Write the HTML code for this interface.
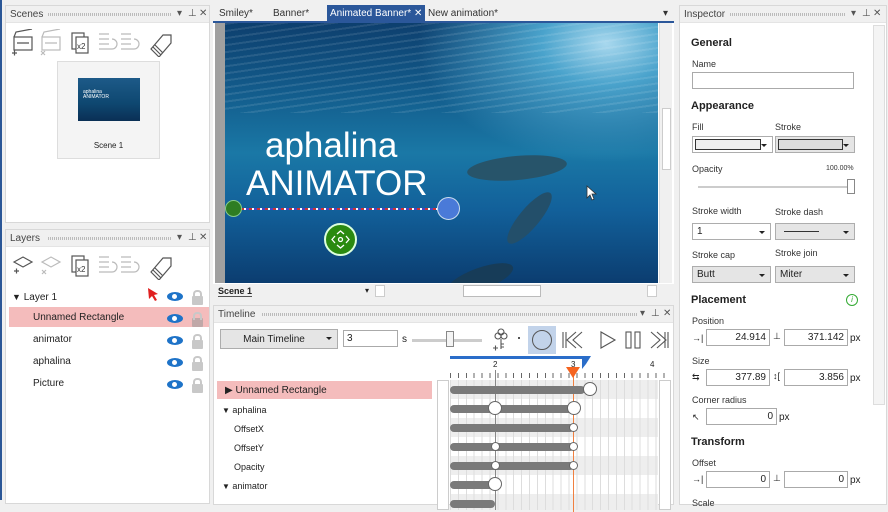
<!DOCTYPE html>
<html><head><meta charset="utf-8"><style>
*{box-sizing:border-box;margin:0;padding:0}
body{width:888px;height:500px;overflow:hidden;background:#f0f0f0;font-family:"Liberation Sans",sans-serif;font-size:10px;color:#222;position:relative}
.a{position:absolute}
.panel{position:absolute;background:#fff;border:1px solid #d8d8d8}
.hdr{position:absolute;left:0;right:0;top:0;height:17px;background:#f0f0f0;font-size:10px;color:#444;padding:3px 0 0 4px;border-bottom:1px solid #e4e4e4}
.dots{position:absolute;top:7px;height:3px;background:repeating-linear-gradient(90deg,#bbb 0 1px,transparent 1px 2px)}
.hic{position:absolute;top:2px;font-size:10px;color:#555}
.row{position:absolute;left:3px;height:20px;font-size:10px;padding-top:5px}
.eye{position:absolute;width:16px;height:9px;border-radius:50%;background:#1e73c8}
.eye:after{content:"";position:absolute;left:5px;top:2px;width:5px;height:5px;border-radius:50%;background:#fff}
.lock{position:absolute;width:11px;height:9px;background:#c8c8c8;border-radius:1px}
.lock:before{content:"";position:absolute;left:1px;top:-6px;width:5px;height:6px;border:2px solid #c8c8c8;border-bottom:none;border-radius:4px 4px 0 0}
.inp{position:absolute;background:#fff;border:1px solid #aaa;height:17px;font-size:10px;text-align:right;padding:2px 3px}
.dd{position:absolute;background:#e5e5e5;border:1px solid #adadad;height:17px;font-size:10px;padding:2px 4px}
.dd:after{content:"";position:absolute;right:5px;top:7px;border:3px solid transparent;border-top:3px solid #222}
.lbl{position:absolute;font-size:9px;color:#333}
.h{position:absolute;font-size:11px;font-weight:bold;color:#222}
.bar{position:absolute;height:8px;background:#7a7a7a;border-radius:4px}
.kf{position:absolute;border-radius:50%;background:#fff;border:1px solid #666}
</style></head><body>
<div class="a" style="left:0;top:0;width:2px;height:500px;background:#2b5797"></div>

<!-- Scenes -->
<div class="panel" style="left:5px;top:5px;width:205px;height:218px">
 <div class="hdr">Scenes<div class="dots" style="left:42px;width:124px"></div><span class="hic" style="left:171px">▾</span><span class="hic" style="left:182px">⊥</span><span class="hic" style="left:193px">✕</span></div>
 <svg class="a" style="left:5px;top:23px" width="170" height="28" fill="none" stroke="#555" stroke-width="1.2">
  <rect x="3" y="8" width="18" height="13"/><path d="M3 8l2-5 16-3M6 14h12M1 24h5M3.5 21.5v5"/>
  <g stroke="#bbb"><rect x="31" y="8" width="18" height="13"/><path d="M31 8l2-5 16-3M34 14h12M30 22l4 4M34 22l-4 4"/></g>
  <rect x="61" y="4" width="12" height="16"/><rect x="65" y="8" width="12" height="16" fill="#fff"/><text x="66" y="20" font-size="8" fill="#333" stroke="none">x2</text>
  <g stroke="#bbb"><path d="M88 5h10M88 10h10M88 15h10M88 20h10M101 10a5 5 0 0 1 0 10h-3"/><path d="M110 5h10M110 10h10M110 15h10M110 20h10M123 10a5 5 0 0 1 0 10h-3"/></g>
  <path d="M140 20l12-14 8 0 0 8-12 14z M142 18l8 8M144 16l8 8"/>
 </svg>
 <div class="a" style="left:51px;top:55px;width:103px;height:98px;background:#f4f4f4;border:1px solid #ddd">
  <div class="a" style="left:20px;top:16px;width:62px;height:43px;background:linear-gradient(180deg,#1d5a88,#0e4770 60%,#0a2f55)"><span class="a" style="left:5px;top:12px;color:#fff;font-size:5px;line-height:5px">aphalina<br>ANIMATOR</span></div>
  <div class="a" style="left:0;right:0;top:79px;text-align:center;font-size:8px">Scene 1</div>
 </div>
</div>

<!-- Layers -->
<div class="panel" style="left:5px;top:229px;width:205px;height:275px">
 <div class="hdr">Layers<div class="dots" style="left:42px;width:124px"></div><span class="hic" style="left:171px">▾</span><span class="hic" style="left:182px">⊥</span><span class="hic" style="left:193px">✕</span></div>
 <svg class="a" style="left:5px;top:22px" width="170" height="28" fill="none" stroke="#555" stroke-width="1.2">
  <path d="M3 10l9-5 9 5-9 5z M3 19h5M5.5 16.5v5"/>
  <g stroke="#bbb"><path d="M31 10l9-5 9 5-9 5zM31 18l4 4M35 18l-4 4"/></g>
  <rect x="61" y="4" width="12" height="16"/><rect x="65" y="8" width="12" height="16" fill="#fff"/><text x="66" y="20" font-size="8" fill="#333" stroke="none">x2</text>
  <g stroke="#bbb"><path d="M88 5h10M88 10h10M88 15h10M88 20h10M101 10a5 5 0 0 1 0 10h-3"/><path d="M110 5h10M110 10h10M110 15h10M110 20h10M123 10a5 5 0 0 1 0 10h-3"/></g>
  <path d="M140 20l12-14 8 0 0 8-12 14z M142 18l8 8M144 16l8 8"/>
 </svg>
 <div class="row" style="top:57px;left:6px"><span style="font-size:9px">▼</span> Layer 1</div>
 <svg class="a" style="left:141px;top:57px" width="12" height="14"><path d="M1 1l10 6-4 1 3 5-2 1-3-5-3 3z" fill="#e02020"/></svg>
 <div class="row" style="top:77px;width:200px;background:#f4bcbc;padding-left:24px">Unnamed Rectangle</div>
 <div class="row" style="top:99px;padding-left:24px">animator</div>
 <div class="row" style="top:121px;padding-left:24px">aphalina</div>
 <div class="row" style="top:143px;padding-left:24px">Picture</div>
 <div class="eye" style="left:161px;top:62px"></div><div class="lock" style="left:186px;top:66px"></div>
 <div class="eye" style="left:161px;top:84px"></div><div class="lock" style="left:186px;top:88px;background:#c0a8a8"></div>
 <div class="eye" style="left:161px;top:106px"></div><div class="lock" style="left:186px;top:110px"></div>
 <div class="eye" style="left:161px;top:128px"></div><div class="lock" style="left:186px;top:132px"></div>
 <div class="eye" style="left:161px;top:150px"></div><div class="lock" style="left:186px;top:154px"></div>
</div>

<!-- Tabs -->
<div class="a" style="left:213px;top:5px;width:461px;height:17px;font-size:10px;color:#333">
 <span class="a" style="left:6px;top:3px">Smiley*</span>
 <span class="a" style="left:60px;top:3px">Banner*</span>
 <span class="a" style="left:114px;top:0;height:17px;width:98px;background:#2b579a;color:#fff;padding:3px 3px;white-space:nowrap">Animated Banner* ✕</span>
 <span class="a" style="left:215px;top:3px">New animation*</span>
 <span class="a" style="left:450px;top:3px">▾</span>
 <div class="a" style="left:0;right:0;top:16px;height:2px;background:#2b579a"></div>
</div>
<div class="a" style="left:213px;top:23px;width:461px;height:262px;background:#fff"></div>
<div class="a" style="left:215px;top:23px;width:10px;height:260px;background:#a0a0a0"></div>
<div class="a" style="left:225px;top:23px;width:433px;height:260px;overflow:hidden;background:radial-gradient(ellipse at 88% 8%,#a8d8ee 0,#4aa3cc 12%,transparent 35%),linear-gradient(180deg,#0d3f6e 0%,#125a8a 25%,#1a78a6 50%,#12609a 72%,#0b3d70 100%)">
 <div class="a" style="left:0;top:0;width:433px;height:90px;background:repeating-linear-gradient(172deg,rgba(255,255,255,.10) 0 2px,transparent 2px 7px)"></div>
 <div class="a" style="left:40px;top:105px;color:#fff;font-size:35px;line-height:36px">aphalina</div>
 <div class="a" style="left:21px;top:143px;color:#fff;font-size:35px;line-height:36px">ANIMATOR</div>
 <div class="a" style="left:242px;top:133px;width:100px;height:24px;background:#27546a;border-radius:50%;transform:rotate(-5deg)"></div>
 <div class="a" style="left:272px;top:185px;width:65px;height:20px;background:#234f6a;border-radius:50%;transform:rotate(-50deg)"></div>
 <div class="a" style="left:220px;top:245px;width:70px;height:22px;background:#173c58;border-radius:50%;transform:rotate(-20deg)"></div>
 <div class="a" style="left:8px;top:185px;width:210px;height:2px;background:repeating-linear-gradient(90deg,#c33 0 3px,#fff 3px 5px,#44c 5px 8px)"></div>
 <div class="a" style="left:0;top:177px;width:17px;height:17px;border-radius:50%;background:#2e7d22;border:1px solid #8c8"></div>
 <div class="a" style="left:212px;top:174px;width:23px;height:23px;border-radius:50%;background:#4a7ad8;border:1px solid #cde"></div>
 <div class="a" style="left:99px;top:200px;width:33px;height:33px;border-radius:50%;background:#2a8a10;border:2px solid #dfd"><svg width="29" height="29" fill="none" stroke="#fff" stroke-width="1.3"><path d="M11 9l3.5-3 3.5 3M11 20l3.5 3 3.5-3M9 11l-3 3.5 3 3.5M20 11l3 3.5-3 3.5"/><circle cx="14.5" cy="14.5" r="2"/></svg></div>
 <svg class="a" style="left:361px;top:162px" width="12" height="16"><path d="M1 1v12l3-3 2 5 2-1-2-5h4z" fill="#fff" stroke="#333" stroke-width=".8"/></svg>
</div>
<div class="a" style="left:659px;top:23px;width:13px;height:260px;background:#f0f0f0;border-left:1px solid #ddd"><div class="a" style="left:2px;top:85px;width:9px;height:62px;background:#fff;border:1px solid #ccc"></div></div>
<div class="a" style="left:213px;top:284px;width:461px;height:15px;background:#f0f0f0">
 <span class="a" style="left:5px;top:2px;font-weight:bold;font-size:9px;border-bottom:1px solid #555">Scene 1</span>
 <span class="a" style="left:152px;top:2px;font-size:8px">▾</span>
 <div class="a" style="left:162px;top:1px;width:10px;height:12px;border:1px solid #ccc;background:#fff"></div>
 <div class="a" style="left:250px;top:1px;width:78px;height:12px;border:1px solid #bbb;background:#fff"></div>
 <div class="a" style="left:434px;top:1px;width:10px;height:12px;border:1px solid #ccc;background:#fff"></div>
</div>

<!-- Timeline -->
<div class="panel" style="left:213px;top:305px;width:461px;height:200px">
 <div class="hdr">Timeline<div class="dots" style="left:48px;width:375px"></div><span class="hic" style="left:426px">▾</span><span class="hic" style="left:437px">⊥</span><span class="hic" style="left:449px">✕</span></div>
 <div class="dd" style="left:6px;top:23px;width:118px;height:20px;text-align:center;padding-top:4px;padding-right:14px;font-size:10px">Main Timeline</div>
 <div class="inp" style="left:129px;top:24px;width:55px;text-align:left">3</div>
 <span class="a" style="left:188px;top:28px">s</span>
 <div class="a" style="left:198px;top:33px;width:70px;height:3px;background:#ccc"></div>
 <div class="a" style="left:232px;top:25px;width:8px;height:16px;background:#f4f4f4;border:1px solid #888"></div>
 <svg class="a" style="left:278px;top:20px" width="34" height="28" fill="none" stroke="#555" stroke-width="1.1"><circle cx="9" cy="6" r="3"/><circle cx="6" cy="10" r="3"/><circle cx="12" cy="10" r="3"/><path d="M9 13v10M9 18h3M9 21h3M1 22h5M3.5 19.5v5"/><path d="M28 12l-2 0" stroke-width="2"/></svg>
 <div class="a" style="left:314px;top:20px;width:28px;height:28px;background:#c2d3ea"><div class="a" style="left:4px;top:4px;width:20px;height:20px;border:1.3px solid #555;border-radius:50%"></div></div>
 <svg class="a" style="left:346px;top:24px" width="110" height="22" fill="none" stroke="#555" stroke-width="1.1">
  <path d="M3 2v16M6 2v16M16 2l-9 8 9 8M22 2l-9 8 9 8"/>
  <path d="M41 2v16l14-8z"/>
  <rect x="66" y="2" width="5" height="16"/><rect x="75" y="2" width="5" height="16"/>
  <path d="M91 2l9 8-9 8M97 2l9 8-9 8M108 2v16M105 2v16"/>
 </svg>
 <div class="a" style="left:236px;top:50px;width:138px;height:3px;background:#2a6dc9"></div>
 <div class="a" style="left:368px;top:50px;border:5px solid transparent;border-top:8px solid #2a6dc9;border-left:4px solid #2a6dc9"></div>
 <span class="a" style="left:279px;top:54px;font-size:8px">2</span><span class="a" style="left:357px;top:54px;font-size:8px">3</span><span class="a" style="left:436px;top:54px;font-size:8px">4</span>
 <div class="a" style="left:236px;top:67px;width:220px;height:5px;background:repeating-linear-gradient(90deg,#666 0 1px,transparent 1px 7.9px)"></div>
 <div class="a" style="left:3px;top:75px;width:215px;height:18px;background:#f4bcbc;padding:4px 0 0 8px;font-size:10px">▶ Unnamed Rectangle</div>
 <div class="a" style="left:8px;top:99px;font-size:9px"><span style="font-size:8px">▼</span> aphalina</div>
 <div class="a" style="left:20px;top:118px;font-size:9px">OffsetX</div>
 <div class="a" style="left:20px;top:137px;font-size:9px">OffsetY</div>
 <div class="a" style="left:20px;top:156px;font-size:9px">Opacity</div>
 <div class="a" style="left:8px;top:175px;font-size:9px"><span style="font-size:8px">▼</span> animator</div>
 <div class="a" style="left:223px;top:74px;width:12px;height:130px;border:1px solid #ccc;background:#fff"></div>
 <div class="a" style="left:445px;top:74px;width:12px;height:130px;border:1px solid #ccc;background:#fff"></div>
 <div class="a" style="left:236px;top:74px;width:208px;height:130px;background:repeating-linear-gradient(180deg,#eee 0 19px,#fff 19px 38px)"></div>
 <div class="a" style="left:236px;top:74px;width:208px;height:130px;background:repeating-linear-gradient(90deg,#ddd 0 1px,transparent 1px 7.9px)"></div>
 <div class="a" style="left:281px;top:64px;width:1px;height:140px;background:#888"></div>
 <div class="a" style="left:359px;top:66px;width:1px;height:140px;background:#f08040"></div>
 <div class="a" style="left:352px;top:61px;border:7px solid transparent;border-top:11px solid #f5631f"></div>
 <div class="bar" style="left:236px;top:80px;width:135px"></div><div class="kf" style="left:369px;top:76px;width:14px;height:14px"></div>
 <div class="bar" style="left:236px;top:99px;width:124px"></div><div class="kf" style="left:274px;top:95px;width:14px;height:14px"></div><div class="kf" style="left:353px;top:95px;width:14px;height:14px"></div>
 <div class="bar" style="left:236px;top:118px;width:124px"></div><div class="kf" style="left:355px;top:117px;width:9px;height:9px"></div>
 <div class="bar" style="left:236px;top:137px;width:124px"></div><div class="kf" style="left:277px;top:136px;width:9px;height:9px"></div><div class="kf" style="left:355px;top:136px;width:9px;height:9px"></div>
 <div class="bar" style="left:236px;top:156px;width:124px"></div><div class="kf" style="left:277px;top:155px;width:9px;height:9px"></div><div class="kf" style="left:355px;top:155px;width:9px;height:9px"></div>
 <div class="bar" style="left:236px;top:175px;width:45px"></div><div class="kf" style="left:274px;top:171px;width:14px;height:14px"></div>
 <div class="bar" style="left:236px;top:194px;width:45px"></div>
</div>

<!-- Inspector -->
<div class="panel" style="left:679px;top:5px;width:208px;height:500px">
 <div class="hdr">Inspector<div class="dots" style="left:50px;width:115px"></div><span class="hic" style="left:171px">▾</span><span class="hic" style="left:182px">⊥</span><span class="hic" style="left:193px">✕</span></div>
 <div class="a" style="left:193px;top:19px;width:12px;height:380px;background:#f4f4f4;border:1px solid #ddd"></div>
 <div class="h" style="left:11px;top:31px">General</div>
 <div class="lbl" style="left:12px;top:53px">Name</div>
 <div class="inp" style="left:12px;top:66px;width:162px"></div>
 <div class="h" style="left:11px;top:94px">Appearance</div>
 <div class="lbl" style="left:12px;top:116px">Fill</div><div class="lbl" style="left:95px;top:116px">Stroke</div>
 <div class="dd" style="left:12px;top:130px;width:81px;background:#fff"><div class="a" style="left:2px;top:2px;width:66px;height:11px;border:1px solid #333;background:#eee"></div></div>
 <div class="dd" style="left:95px;top:130px;width:80px"><div class="a" style="left:2px;top:2px;width:65px;height:11px;border:1px solid #333;background:#ddd"></div></div>
 <div class="lbl" style="left:12px;top:158px">Opacity</div><div class="lbl" style="left:146px;top:159px;font-size:7px">100.00%</div>
 <div class="a" style="left:18px;top:180px;width:152px;height:2px;background:#ccc"></div>
 <div class="a" style="left:167px;top:173px;width:8px;height:15px;background:#fff;border:1px solid #888"></div>
 <div class="lbl" style="left:12px;top:200px">Stroke width</div><div class="lbl" style="left:95px;top:201px">Stroke dash</div>
 <div class="dd" style="left:12px;top:217px;width:79px;background:#fff">1</div>
 <div class="dd" style="left:95px;top:217px;width:80px"><div class="a" style="left:8px;top:7px;width:35px;height:1px;background:#333"></div></div>
 <div class="lbl" style="left:12px;top:244px">Stroke cap</div><div class="lbl" style="left:95px;top:242px">Stroke join</div>
 <div class="dd" style="left:12px;top:260px;width:79px">Butt</div>
 <div class="dd" style="left:95px;top:260px;width:80px">Miter</div>
 <div class="h" style="left:11px;top:288px">Placement</div>
 <div class="a" style="left:166px;top:288px;width:12px;height:12px;border:1px solid #3a3;border-radius:50%;color:#3a3;font-size:8px;text-align:center;line-height:10px;font-style:italic">i</div>
 <div class="lbl" style="left:12px;top:310px">Position</div>
 <span class="a" style="left:12px;top:327px;font-size:9px">→|</span><div class="inp" style="left:26px;top:323px;width:64px">24.914</div>
 <span class="a" style="left:93px;top:325px;font-size:9px">⊥</span><div class="inp" style="left:104px;top:323px;width:64px">371.142</div><span class="a" style="left:170px;top:327px">px</span>
 <div class="lbl" style="left:12px;top:350px">Size</div>
 <span class="a" style="left:12px;top:366px;font-size:9px">⇆</span><div class="inp" style="left:26px;top:363px;width:64px">377.89</div>
 <span class="a" style="left:93px;top:365px;font-size:9px">↕[</span><div class="inp" style="left:104px;top:363px;width:64px">3.856</div><span class="a" style="left:170px;top:367px">px</span>
 <div class="lbl" style="left:12px;top:389px">Corner radius</div>
 <span class="a" style="left:12px;top:406px;font-size:9px">↖</span><div class="inp" style="left:26px;top:402px;width:71px">0</div><span class="a" style="left:99px;top:406px">px</span>
 <div class="h" style="left:11px;top:430px">Transform</div>
 <div class="lbl" style="left:12px;top:452px">Offset</div>
 <span class="a" style="left:12px;top:468px;font-size:9px">→|</span><div class="inp" style="left:26px;top:465px;width:64px">0</div>
 <span class="a" style="left:93px;top:467px;font-size:9px">⊥</span><div class="inp" style="left:104px;top:465px;width:64px">0</div><span class="a" style="left:170px;top:469px">px</span>
 <div class="lbl" style="left:12px;top:492px">Scale</div>
</div>
</body></html>
